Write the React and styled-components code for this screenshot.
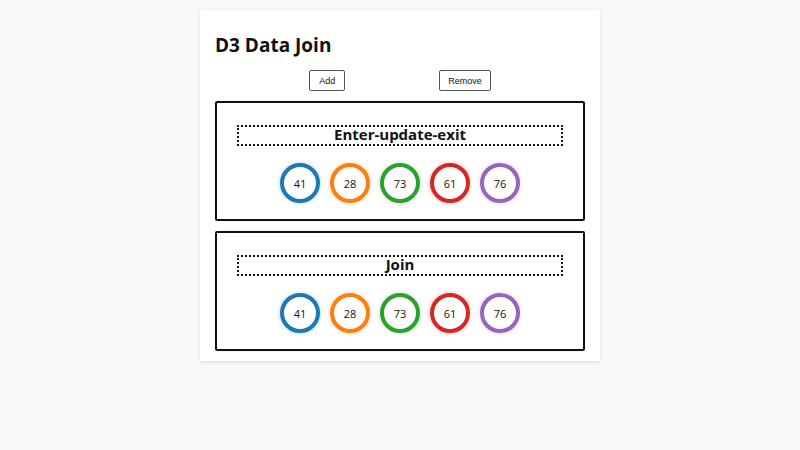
import React from "react";
import styled, { createGlobalStyle } from "styled-components";

const Global = createGlobalStyle`
  html, body { margin: 0; padding: 0; background: #f8f8f8; }
  body { font-family: "Open Sans", "DejaVu Sans", sans-serif; color: #111; }
`;

const Page = styled.div`
  width: 800px;
  height: 450px;
  display: flex;
  justify-content: center;
  align-items: flex-start;
  padding-top: 10px;
  box-sizing: border-box;
`;

const Card = styled.div`
  width: 400px;
  background: #fff;
  box-shadow: 0 1px 3px rgba(0, 0, 0, 0.12);
  padding: 24px 15px 10px;
  box-sizing: border-box;
  display: flex;
  flex-direction: column;
`;

const Title = styled.h1`
  margin: 0;
  font-family: "Open Sans", "DejaVu Sans", sans-serif;
  font-size: 19px;
  font-weight: 700;
  line-height: 22px;
  color: #111;
`;

const Toolbar = styled.div`
  display: flex;
  justify-content: center;
  gap: 94px;
  margin-top: 14px;
  margin-bottom: 10px;
`;

const Button = styled.button`
  height: 21px;
  padding: 0 ${(p) => p.$pad}px;
  background: #fff;
  border: 1px solid #555;
  border-radius: 2px;
  font-family: "Liberation Sans", Arial, sans-serif;
  font-size: 9px;
  color: #111;
`;

const Panel = styled.div`
  border: 2px solid #111;
  border-radius: 2px;
  padding: 22px 20px 16px;
  margin-bottom: 10px;
  box-shadow: 0 0 3px rgba(0, 0, 0, 0.08);
  display: flex;
  flex-direction: column;
  align-items: stretch;
  &:last-child { margin-bottom: 0; }
`;

const Label = styled.div`
  border: 2px dotted #111;
  height: 17px;
  line-height: 15px;
  padding-bottom: 2px;
  box-sizing: content-box;
  height: 15px;
  text-align: center;
  font-weight: 700;
  font-size: 15px;
  color: #111;
`;

const Row = styled.div`
  display: flex;
  justify-content: center;
  gap: 10px;
  margin-top: 17px;
`;

const Circle = styled.div`
  width: 40px;
  height: 40px;
  box-sizing: border-box;
  border-radius: 50%;
  border: 4px solid ${(p) => p.$color};
  box-shadow: 0 0 4px ${(p) => p.$color}55;
  display: flex;
  align-items: center;
  justify-content: center;
  font-size: 11px;
  color: #111;
`;

const data = [
  { v: 41, c: "#1f77b4" },
  { v: 28, c: "#ff7f0e" },
  { v: 73, c: "#2ca02c" },
  { v: 61, c: "#d62728" },
  { v: 76, c: "#9467bd" },
];

function Section({ label }) {
  return (
    <Panel>
      <Label>{label}</Label>
      <Row>
        {data.map((d) => (
          <Circle key={d.v} $color={d.c}>{d.v}</Circle>
        ))}
      </Row>
    </Panel>
  );
}

export default function App() {
  return (
    <>
      <Global />
      <Page>
        <Card>
          <Title>D3 Data Join</Title>
          <Toolbar>
            <Button $pad={9}>Add</Button>
            <Button $pad={8}>Remove</Button>
          </Toolbar>
          <Section label="Enter-update-exit" />
          <Section label="Join" />
        </Card>
      </Page>
    </>
  );
}
